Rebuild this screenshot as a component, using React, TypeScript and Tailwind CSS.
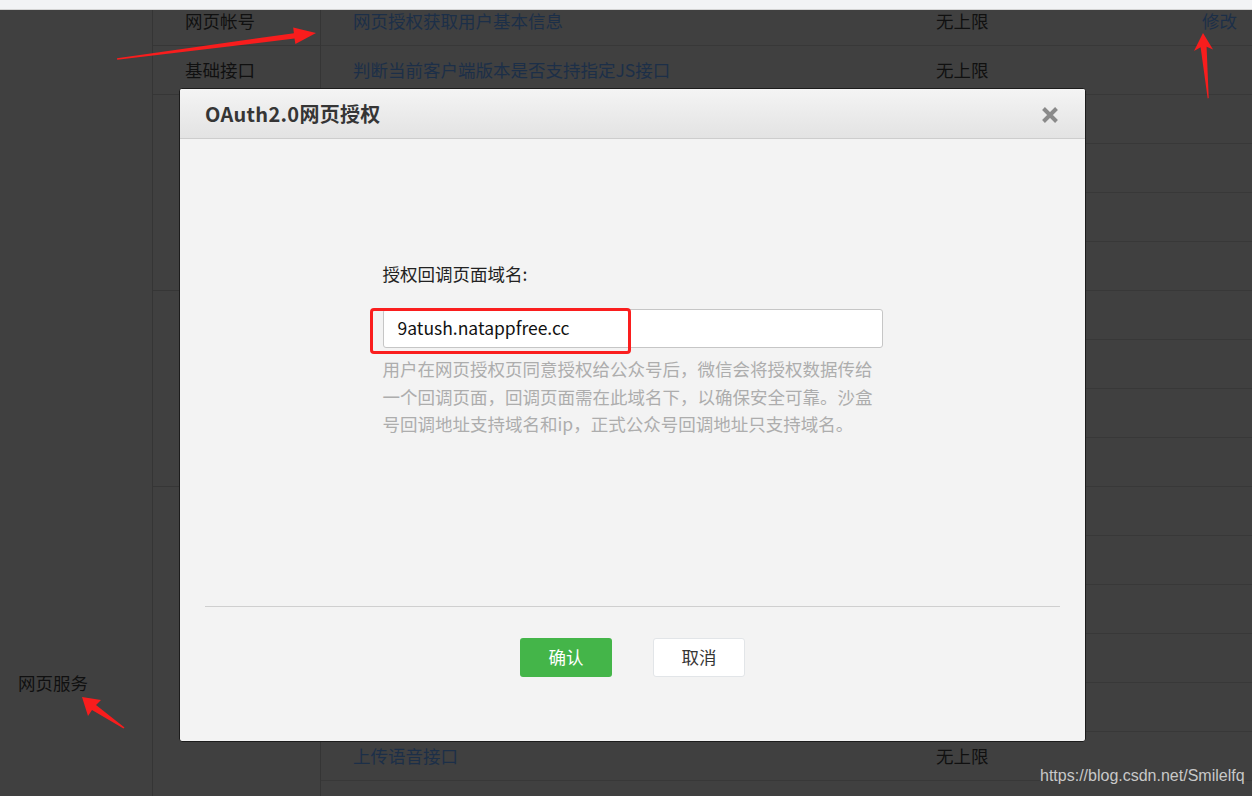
import React from "react";

const rowsRight: { api: string; limit: string; op?: string }[] = [
  { api: "判断当前客户端版本是否支持指定JS接口", limit: "无上限" },
  { api: "", limit: "" },
  { api: "", limit: "" },
  { api: "", limit: "" },
  { api: "", limit: "" },
  { api: "", limit: "" },
  { api: "", limit: "" },
  { api: "", limit: "" },
  { api: "", limit: "" },
  { api: "", limit: "" },
  { api: "", limit: "" },
  { api: "", limit: "" },
  { api: "", limit: "" },
  { api: "", limit: "" },
  { api: "上传语音接口", limit: "无上限" },
  { api: "", limit: "" },
];

export default function App() {
  return (
    <div className="relative w-[1252px] h-[796px] overflow-hidden bg-[#404040] font-['Noto_Sans_CJK_SC','Noto_Sans',sans-serif]">
      {/* top strip */}
      <div className="h-[10px] bg-[#f2f3f5] border-b border-[#d4d4d4]" />
      {/* table */}
      <div className="h-[786px]">
        <div className="flex text-[17.5px] leading-[20px]">
          <div className="w-[153px] shrink-0 border-r border-[#353535] pt-[663px] pl-[18px] text-[#101010]">
            网页服务
          </div>
          <div className="w-[168px] shrink-0 flex flex-col border-r border-[#353535] text-[#101010]">
            <div className="h-[36px] border-b border-[#363636] pt-[1px] pl-[32px]">网页帐号</div>
            <div className="h-[49px] border-b border-[#363636] flex items-center pl-[32px]">基础接口</div>
            <div className="h-[196px] border-b border-[#363636]" />
            <div className="h-[196px] border-b border-[#363636]" />
            <div className="h-[343px]" />
          </div>
          <div className="flex-1 flex flex-col">
            <div className="h-[36px] shrink-0 border-b border-[#383838] grid grid-cols-[615px_266px_1fr] items-start pt-[1px]">
              <div className="pl-[32px] text-[#1c2f48] whitespace-nowrap">网页授权获取用户基本信息</div>
              <div className="text-[#101010]">无上限</div>
              <div className="text-[#1c2f48]">修改</div>
            </div>
            {rowsRight.map((r, i) => (
              <div
                key={i}
                className="h-[49px] shrink-0 border-b border-[#383838] grid grid-cols-[615px_266px_1fr] items-center"
              >
                <div className="pl-[32px] text-[#1c2f48] whitespace-nowrap">{r.api}</div>
                <div className="text-[#101010]">{r.limit}</div>
                <div className="text-[#1c2f48]">{r.op ?? ""}</div>
              </div>
            ))}
          </div>
        </div>
      </div>

      {/* modal */}
      <div className="absolute left-[179px] top-[88px] w-[907px] h-[654px] border border-[#1c1c1c] rounded-[3px] bg-[#f3f3f3] flex flex-col overflow-hidden">
        <div className="h-[50px] shrink-0 border-b border-[#cdcdcd] bg-gradient-to-b from-[#f4f4f4] to-[#e3e3e3] flex items-center justify-between pl-[25px] pr-[26px]">
          <span className="text-[20px] font-bold text-[#353535] leading-[26px] tracking-[0.3px]">OAuth2.0网页授权</span>
          <svg width="18" height="18" viewBox="0 0 18 18" className="mt-[2px]">
            <path d="M2.5 2.5 L15.5 15.5 M15.5 2.5 L2.5 15.5" stroke="#8a8a8a" strokeWidth="4" strokeLinecap="butt" />
          </svg>
        </div>
        <div className="flex-1 flex flex-col items-center pt-[123px]">
          <div className="w-[500px] flex flex-col">
            <div className="text-[17.5px] leading-[24px] text-[#222222]">授权回调页面域名:</div>
            <div className="relative mt-[23px]">
              <div className="h-[39px] bg-white border border-[#c6c6c6] rounded-[3px] flex items-center pl-[14px] text-[17.5px] text-[#111111]">
                9atush.natappfree.cc
              </div>
              <div className="absolute left-[-13px] top-[-1px] w-[261px] h-[46px] border-[3px] border-[#fa1e1e] rounded-[4px]" />
            </div>
            <p className="mt-[7px] text-[17.5px] leading-[27.5px] text-[#adadad]">
              用户在网页授权页同意授权给公众号后，微信会将授权数据传给一个回调页面，回调页面需在此域名下，以确保安全可靠。沙盒号回调地址支持域名和ip，正式公众号回调地址只支持域名。
            </p>
          </div>
        </div>
        <div className="mx-[25px] h-px bg-[#cfcfcf]" />
        <div className="h-[134px] shrink-0 flex justify-center gap-[41px] pt-[31px]">
          <button className="w-[92px] h-[39px] rounded-[3px] bg-[#44b549] text-white text-[17.5px]">确认</button>
          <button className="w-[92px] h-[39px] rounded-[3px] bg-white border border-[#e2e5e8] text-[#353535] text-[17.5px]">取消</button>
        </div>
      </div>

      {/* annotation arrows */}
      <svg className="absolute left-0 top-0 pointer-events-none" width="1252" height="796" viewBox="0 0 1252 796">
        <polygon
          fill="#f81d1d"
          points="117,58.3 293.9,33.2 293.2,27.5 316,33 295.4,44 294.5,38.6 117.2,59.8"
        />
        <polygon
          fill="#f81d1d"
          points="1203,33 1213,49.5 1206.6,46.8 1208.7,98 1207.7,98.5 1200.6,47.2 1194,51"
        />
        <polygon
          fill="#f81d1d"
          points="82,697 101,700 96,705 124.5,727.5 123.5,728.5 92,710 88,716"
        />
      </svg>

      {/* watermark */}
      <div className="absolute left-[1040px] top-[766px] text-[16px] leading-[20px] text-[#c8c8c8] font-['Liberation_Sans',Arial,sans-serif] whitespace-nowrap">
        https://blog.csdn.net/Smilelfq
      </div>
    </div>
  );
}
